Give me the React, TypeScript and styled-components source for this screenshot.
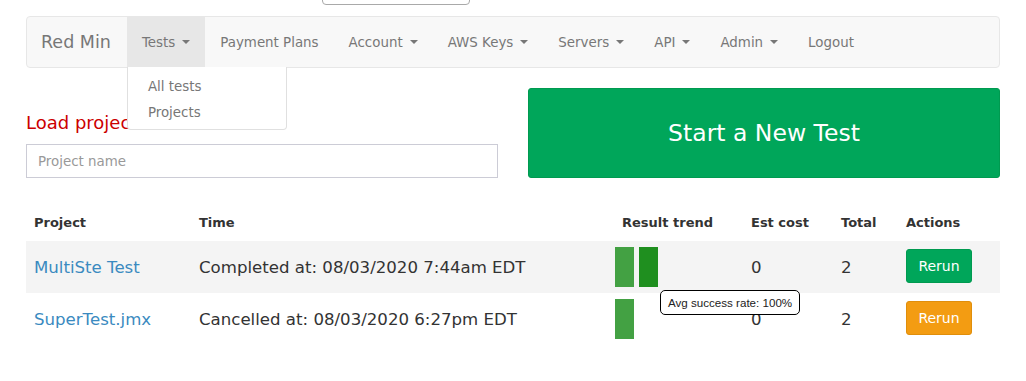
import { FC } from "react";
import styled, { createGlobalStyle } from "styled-components";

const GlobalStyle = createGlobalStyle`
  body {
    margin: 0;
    background: #fff;
    font-family: "DejaVu Sans", Verdana, sans-serif;
    color: #333;
  }
`;

const navItems = [
  { label: "Tests", caret: true, active: true },
  { label: "Payment Plans" },
  { label: "Account", caret: true },
  { label: "AWS Keys", caret: true },
  { label: "Servers", caret: true },
  { label: "API", caret: true },
  { label: "Admin", caret: true },
  { label: "Logout" },
];

interface Run {
  project: string;
  time: string;
  bars: Array<string>;
  cost: number;
  total: number;
  action: "success" | "warning";
  tooltip?: string;
}

const runs: Array<Run> = [
  {
    project: "MultiSte Test",
    time: "Completed at: 08/03/2020 7:44am EDT",
    bars: ["#43a143", "#1f8f1f"],
    cost: 0,
    total: 2,
    action: "success",
    tooltip: "Avg success rate: 100%",
  },
  {
    project: "SuperTest.jmx",
    time: "Cancelled at: 08/03/2020 6:27pm EDT",
    bars: ["#43a143"],
    cost: 0,
    total: 2,
    action: "warning",
  },
];

const App: FC = () => {
  return (
    <>
      <GlobalStyle />
      <StyledPage>
        <StyledTopStrip>
          <StyledTopInput />
        </StyledTopStrip>
        <StyledNavbar>
          <StyledBrand>Red Min</StyledBrand>
          {navItems.map((item) => (
            <StyledNavItem key={item.label} active={item.active}>
              {item.label}
              {item.caret && <StyledCaret />}
              {item.active && (
                <StyledDropdown>
                  <StyledDropdownItem>All tests</StyledDropdownItem>
                  <StyledDropdownItem>Projects</StyledDropdownItem>
                </StyledDropdown>
              )}
            </StyledNavItem>
          ))}
        </StyledNavbar>

        <StyledColumns>
          <StyledLoadBlock>
            <StyledHeading>Load project</StyledHeading>
            <StyledInput placeholder="Project name" />
          </StyledLoadBlock>
          <StyledStartButton>Start a New Test</StyledStartButton>
        </StyledColumns>

        <StyledTable>
          <colgroup>
            <col style={{ width: 165 }} />
            <col style={{ width: 423 }} />
            <col style={{ width: 129 }} />
            <col style={{ width: 90 }} />
            <col style={{ width: 65 }} />
            <col style={{ width: 102 }} />
          </colgroup>
          <thead>
            <tr>
              <StyledTh>Project</StyledTh>
              <StyledTh>Time</StyledTh>
              <StyledTh>Result trend</StyledTh>
              <StyledTh>Est cost</StyledTh>
              <StyledTh>Total</StyledTh>
              <StyledTh>Actions</StyledTh>
            </tr>
          </thead>
          <tbody>
            {runs.map((run, i) => (
              <StyledRow key={run.project} striped={i % 2 === 0}>
                <StyledTd>
                  <StyledLink>{run.project}</StyledLink>
                </StyledTd>
                <StyledTd>{run.time}</StyledTd>
                <StyledTrendCell>
                  <StyledBars>
                    {run.bars.map((color, j) => (
                      <StyledBar key={j} color={color} />
                    ))}
                  </StyledBars>
                  {run.tooltip && <StyledTooltip>{run.tooltip}</StyledTooltip>}
                </StyledTrendCell>
                <StyledTd>{run.cost}</StyledTd>
                <StyledTd>{run.total}</StyledTd>
                <StyledTd>
                  <StyledRerun variant={run.action}>Rerun</StyledRerun>
                </StyledTd>
              </StyledRow>
            ))}
          </tbody>
        </StyledTable>
      </StyledPage>
    </>
  );
};

const StyledPage = styled.div`
  width: 974px;
  padding: 0 26px;
`;

const StyledTopStrip = styled.div`
  height: 16px;
  overflow: hidden;
`;

const StyledTopInput = styled.div`
  margin: -30px 0 0 296px;
  width: 146px;
  height: 33px;
  border: 1px solid #a9a9a9;
  border-radius: 4px;
`;

const StyledNavbar = styled.nav`
  display: flex;
  align-items: stretch;
  height: 52px;
  box-sizing: border-box;
  background: #f8f8f8;
  border: 1px solid #e7e7e7;
  border-radius: 4px;
  position: relative;
  z-index: 2;
`;

const StyledBrand = styled.div`
  display: flex;
  align-items: center;
  padding: 0 16px 0 14px;
  font-size: 17.5px;
  color: #777;
`;

const StyledNavItem = styled.div<{ active?: boolean }>`
  position: relative;
  display: flex;
  align-items: center;
  padding: 0 15px;
  font-size: 13.4px;
  color: #777;
  background: ${(p) => (p.active ? "#e7e7e7" : "transparent")};
`;

const StyledCaret = styled.span`
  display: inline-block;
  margin-left: 7px;
  width: 0;
  height: 0;
  border-left: 4px solid transparent;
  border-right: 4px solid transparent;
  border-top: 4px solid #777;
`;

const StyledDropdown = styled.div`
  position: absolute;
  top: 50px;
  left: 0;
  width: 160px;
  height: 63px;
  padding: 7px 0 0;
  box-sizing: border-box;
  background: #fff;
  border: 1px solid rgba(0, 0, 0, 0.12);
  border-top: none;
  border-radius: 0 0 4px 4px;
`;

const StyledDropdownItem = styled.div`
  padding: 0 20px;
  line-height: 26px;
  font-size: 13.4px;
  color: #777;
`;

const StyledColumns = styled.div`
  display: grid;
  grid-template-columns: 472px 472px;
  column-gap: 30px;
  margin-top: 20px;
`;

const StyledLoadBlock = styled.div`
  display: flex;
  flex-direction: column;
  padding-top: 22px;
`;

const StyledHeading = styled.div`
  font-size: 18px;
  color: #cc0000;
  line-height: 26px;
  margin-bottom: 8px;
`;

const StyledInput = styled.input`
  height: 34px;
  box-sizing: border-box;
  border: 1px solid #ccccd6;
  padding: 0 11px;
  font-family: inherit;
  font-size: 13.4px;
  &::placeholder {
    color: #999;
  }
`;

const StyledStartButton = styled.button`
  height: 90px;
  border: 1px solid #009a50;
  border-radius: 3px;
  background: #00a65a;
  color: #fff;
  font-family: inherit;
  font-size: 23.5px;
`;

const StyledTable = styled.table`
  margin-top: 25px;
  width: 974px;
  table-layout: fixed;
  border-collapse: collapse;
  font-size: 16.6px;
`;

const StyledTh = styled.th`
  text-align: left;
  font-size: 13px;
  font-weight: bold;
  color: #333;
  padding: 10px 8px;
  height: 18px;
`;

const StyledRow = styled.tr<{ striped?: boolean }>`
  background: ${(p) => (p.striped ? "#f4f4f4" : "#fff")};
`;

const StyledTd = styled.td`
  height: 52px;
  padding: 0 8px;
  box-sizing: border-box;
  vertical-align: middle;
  color: #333;
`;

const StyledTrendCell = styled(StyledTd)`
  position: relative;
  padding-left: 1px;
`;

const StyledBars = styled.div`
  display: flex;
  gap: 5px;
`;

const StyledBar = styled.div<{ color: string }>`
  width: 19px;
  height: 40px;
  background: ${(p) => p.color};
`;

const StyledTooltip = styled.div`
  position: absolute;
  left: 46px;
  top: 49px;
  z-index: 3;
  padding: 5px 7px;
  background: #fff;
  border: 1px solid #000;
  border-radius: 5px;
  font-family: "Liberation Sans", Arial, sans-serif;
  font-size: 11.6px;
  white-space: nowrap;
  color: #222;
`;

const StyledLink = styled.span`
  color: #3a8ac0;
`;

const StyledRerun = styled.button<{ variant: "success" | "warning" }>`
  width: 66px;
  height: 34px;
  margin-top: -2px;
  border-radius: 3px;
  border: 1px solid ${(p) => (p.variant === "success" ? "#009a50" : "#e08e0b")};
  background: ${(p) => (p.variant === "success" ? "#00a65a" : "#f39c12")};
  color: #fff;
  font-family: inherit;
  font-size: 14px;
`;

export default App;
